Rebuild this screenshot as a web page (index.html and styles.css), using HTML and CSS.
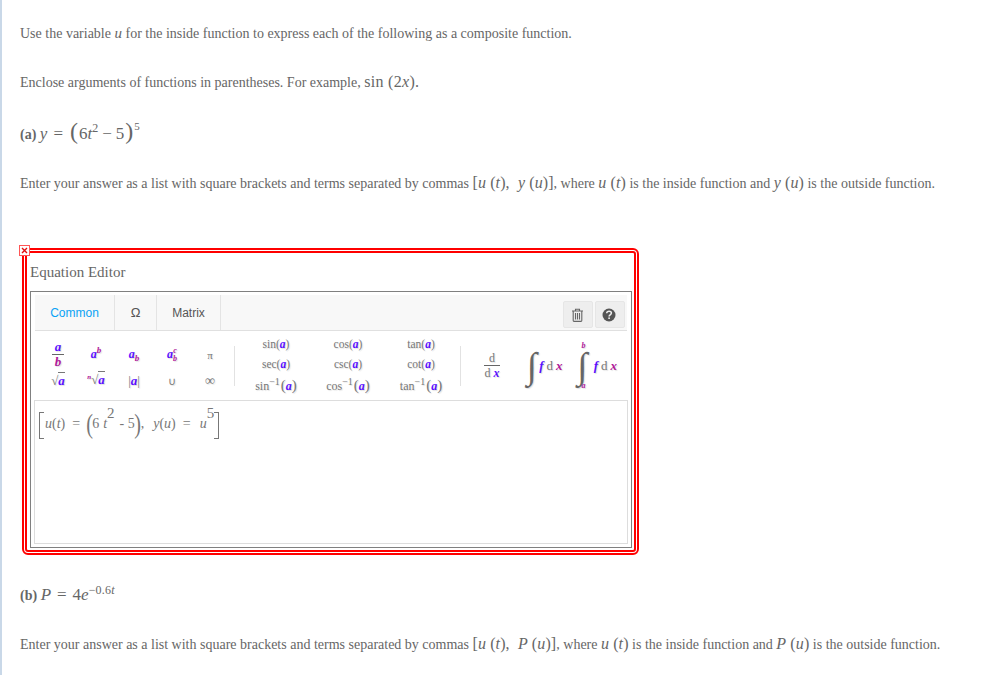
FILE: index.html
```html
<!DOCTYPE html>
<html lang="en">
<head>
<meta charset="utf-8">
<title>Composite functions</title>
<link rel="stylesheet" href="styles.css">
</head>
<body>
<main class="page">
  <p class="line l1">Use the variable <i class="mv">u</i> for the inside function to express each of the following as a composite function.</p>
  <p class="line l2">Enclose arguments of functions in parentheses. For example, <span class="m16">sin (2<i>x</i>).</span></p>
  <p class="line l3"><b>(a)</b> <span class="m17"><i>y</i><span class="rel">=</span></span><span class="bigp">(</span><span class="m17">6<i>t</i><sup class="sq">2</sup><span class="bin">&minus;</span>5</span><span class="bigp">)</span><sup class="pow">5</sup></p>
  <p class="line l4">Enter your answer as a list with square brackets and terms separated by commas <span class="m15">[<i>u</i> (<i>t</i>), &nbsp;<i>y</i> (<i>u</i>)]</span>, where <span class="m15"><i>u</i> (<i>t</i>)</span> is the inside function and <span class="m15"><i>y</i> (<i>u</i>)</span> is the outside function.</p>

  <section class="outer">
    <span class="xbox"><svg width="9" height="9" viewBox="0 0 9 9"><path d="M2 2l5 5M7 2l-5 5" stroke="#e01010" stroke-width="1.4" fill="none"/></svg></span>
    <h2 class="title">Equation Editor</h2>
    <div class="frame">
      <div class="bar">
        <div class="tab active t1">Common</div>
        <div class="tab t2">Ω</div>
        <div class="tab t3">Matrix</div>
        <div class="tools">
          <div class="tool"><svg width="13" height="14" viewBox="0 0 13 14"><path d="M1 3h11M4.500 3V1.300h4V3M2.200 3v9.600c0 .5.300.8.800.8h7c.5 0 .8-.3.800-.8V3M4.500 5v6.500M6.500 5v6.500M8.500 5v6.500" fill="none" stroke="#666" stroke-width="1.100"/></svg></div>
          <div class="tool"><svg width="14" height="14" viewBox="0 0 14 14"><circle cx="7" cy="7" r="6.500" fill="#555"/><path d="M4.700 5.300C4.800 3.900 5.800 3.200 7.100 3.200c1.400 0 2.300.8 2.300 1.900 0 1.900-2.300 1.700-2.300 3.300" fill="none" stroke="#eee" stroke-width="1.500"/><rect x="6.300" y="9.400" width="1.600" height="1.600" fill="#eee"/></svg></div>
        </div>
      </div>
      <div class="palette">
        <div class="basic">
          <span class="cell"><span class="frac big-frac"><i class="v">a</i><i class="p">b</i></span></span>
          <span class="cell"><i class="v">a</i><span class="up p">b</span></span>
          <span class="cell"><i class="v">a</i><span class="dn p">b</span></span>
          <span class="cell"><i class="v">a</i><span class="stack"><i class="p">c</i><i class="p">b</i></span></span>
          <span class="cell g">π</span>
          <span class="cell g big">√<i class="v over">a</i></span>
          <span class="cell g big"><span class="root p">n</span>√<i class="v over">a</i></span>
          <span class="cell g big">|<i class="v">a</i>|</span>
          <span class="cell g">∪</span>
          <span class="cell g inf">∞</span>
        </div>
        <div class="sep"></div>
        <div class="trig">
          <span>sin(<i class="v">a</i>)</span><span>cos(<i class="v">a</i>)</span><span>tan(<i class="v">a</i>)</span>
          <span>sec(<i class="v">a</i>)</span><span>csc(<i class="v">a</i>)</span><span>cot(<i class="v">a</i>)</span>
          <span class="inv">sin<sup>−1</sup><em>(</em><i class="v">a</i><em>)</em></span><span class="inv">cos<sup>−1</sup><em>(</em><i class="v">a</i><em>)</em></span><span class="inv">tan<sup>−1</sup><em>(</em><i class="v">a</i><em>)</em></span>
        </div>
        <div class="sep"></div>
        <div class="calc">
          <span class="frac dd"><span>d</span><span>d <i class="v">x</i></span></span>
          <span class="int first"><span class="intg">∫</span><i class="v">f</i><span class="dx">d</span><i class="p">x</i></span>
          <span class="int defi"><span class="limits"><i class="p">b</i><span class="intg">∫</span><i class="p">a</i></span><i class="v">f</i><span class="dx">d</span><i class="p">x</i></span>
        </div>
      </div>
      <div class="input">
        <div class="expr">
          <span class="br l"></span>
          <i>u</i><span>(</span><i>t</i><span>)</span><span class="eq">=</span><span class="par">(</span><span>6</span><i class="gap">t</i><span class="exp">2</span><span class="minus">- 5</span><span class="par">)</span><span class="comma">,</span><i>y</i><span>(</span><i>u</i><span>)</span><span class="eq">=</span><i class="gap2">u</i><span class="exp e5">5</span>
          <span class="br r"></span>
        </div>
      </div>
    </div>
  </section>

  <p class="line l5"><b>(b)</b> <span class="m17"><i>P</i><span class="rel">=</span>4<i>e</i></span><sup class="epow">−0.6<i>t</i></sup></p>
  <p class="line l6">Enter your answer as a list with square brackets and terms separated by commas <span class="m15">[<i>u</i> (<i>t</i>), &nbsp;<i>P</i> (<i>u</i>)]</span>, where <span class="m15"><i>u</i> (<i>t</i>)</span> is the inside function and <span class="m15"><i>P</i> (<i>u</i>)</span> is the outside function.</p>
</main>
</body>
</html>
```
FILE: styles.css
```css
html, body { margin: 0; padding: 0; background: #fff; height: 100%; overflow: hidden; }
body { font-family: "Liberation Serif", "Times New Roman", serif; color: #666; }
.page { border-left: 2px solid #c9d8e8; padding-left: 18px; height: 675px; box-sizing: border-box; font-size: 14px; }
.line { margin: 0; line-height: 20px; white-space: nowrap; }
.l1 { padding-top: 23px; }
.l2 { margin-top: 28px; }
.l3 { margin-top: 30px; height: 20px; }
.l4 { margin-top: 30px; }
.l5 { margin-top: 30px; }
.l6 { margin-top: 28px; }
.mv { font-size: 15px; }
.m16 { font-size: 16px; letter-spacing: .3px; }
.m17 { font-size: 17px; }
.m15 { font-size: 16px; letter-spacing: .1px; }
.l3 b, .l5 b { font-size: 14px; }
.rel { margin: 0 6px 0 6px; }
.bin { margin: 0 4px; }
.bigp { font-size: 24px; line-height: 16px; margin: 0 1px; }
.sq { font-size: 12px; line-height: 0; }
.pow { font-size: 11px; line-height: 0; position: relative; top: -3px; }
.epow { font-size: 12px; line-height: 0; letter-spacing: .2px; }

.outer { position: relative; box-sizing: border-box; width: 617px; height: 307px; margin: 54px 0 0 2px; border: 5px double #f00; border-radius: 6px; padding: 0 2px 2px 3px; }
.xbox { position: absolute; left: -8px; top: -8px; width: 9px; height: 9px; border: 1px solid #f55; background: #fff; display: flex; }
.title { margin: 0; font-weight: normal; font-size: 15px; color: #666; height: 38px; line-height: 38px; }
.frame { box-sizing: border-box; height: 257px; border: 1px solid #808080; padding: 3px; display: flex; flex-direction: column; }

.bar { display: flex; height: 36px; margin: 0 1px; box-sizing: border-box; background: #f8f8f8; border-bottom: 1px solid #e0e0e0; font-family: "Liberation Sans", Arial, sans-serif; font-size: 12px; }
.tab { display: flex; align-items: center; justify-content: center; border-right: 1px solid #e4e4e4; color: #555; }
.t1 { width: 79px; }
.t2 { width: 41px; font-size: 13px; }
.t3 { width: 63px; }
.active { color: #08a2f5; }
.tools { margin-left: auto; display: flex; gap: 2px; padding: 6px 2px 2px 0; }
.tool { width: 30px; height: 27px; padding-right: 2px; display: flex; align-items: center; justify-content: center; background: #eee; border: 1px solid #e6e6e6; border-radius: 2px; box-sizing: border-box; }

.palette { height: 69px; display: flex; align-items: center; padding-left: 5px; font-size: 12px; color: #777; text-shadow: 1px 1px 1px rgba(0,0,0,.12); }
.basic { display: grid; grid-template-columns: repeat(5, 38px); grid-template-rows: 30px 22px; width: 195px; }
.cell { display: block; text-align: center; align-self: center; font-weight: bold; line-height: 16px; white-space: nowrap; }
.cell.g { font-weight: normal; color: #777; font-size: 11px; }
.cell.big { font-size: 13px; }
.v { color: #5a10ff; font-weight: bold; font-style: italic; }
.p { color: #b0189a; font-weight: bold; font-style: italic; }
.frac { display: inline-flex; flex-direction: column; align-items: center; line-height: 13px; vertical-align: middle; }
.frac > :first-child { border-bottom: 1px solid #666; padding: 0 2px; }
.big-frac { font-size: 13px; line-height: 14px; }
.big-frac > :first-child { padding: 0 3px; }
.up { font-size: 9px; position: relative; top: -5px; }
.dn { font-size: 9px; position: relative; top: 3px; }
.stack { display: inline-flex; flex-direction: column; font-size: 8px; line-height: 8px; vertical-align: middle; }
.root { font-size: 7px; position: relative; top: -5px; margin-right: 0; }
.over { border-top: 1px solid #777; }
.cell.inf { font-size: 14px; }
.sep { width: 1px; height: 40px; background: #e2e2e2; flex: none; }
.trig { display: grid; grid-template-columns: 70px 74px 72px; grid-template-rows: 19px 20px 23px; width: 225px; padding-left: 6px; box-sizing: border-box; text-align: center; align-items: center; font-size: 11.500px; }
.inv { font-size: 12px; white-space: nowrap; }
.inv sup { font-size: 10px; line-height: 0; margin-right: 1px; }
.inv em { font-style: normal; font-size: 15px; }
.calc { display: flex; align-items: center; font-size: 13px; }
.dd { margin-left: 22px; width: 18px; line-height: 14px; font-size: 12px; }
.dd > :first-child { width: 16px; padding: 0; text-align: center; }
.int { display: flex; align-items: center; margin-left: 19px; white-space: nowrap; }
.int.first { margin-left: 26px; }
.intg { font-size: 37px; line-height: 32px; font-style: italic; color: #666; margin-right: 2px; }
.dx { margin: 0 3px 0 3px; }
.int.defi { margin-left: 15px; }
.limits { display: flex; flex-direction: column; align-items: center; font-size: 8px; line-height: 8px; margin-right: 4px; }

.input { box-sizing: border-box; height: 144px; border: 1px solid #ddd; }
.expr { display: flex; align-items: center; height: 46px; padding-left: 4px; font-size: 14px; color: #777; }
.expr > * { flex: none; }
.br { width: 5px; height: 27px; border: 1px solid #777; box-sizing: border-box; margin-top: 3px; }
.br.l { border-right: 0; margin-right: 1px; }
.br.r { border-left: 0; margin-left: 0; }
.eq { margin: 0 7px; font-size: 14px; }
.par { font-size: 27px; margin: 0 -2px 0 -2px; transform: scaleX(.75); }
.gap { margin-left: 4px; }
.gap2 { margin-left: 2px; }
.exp { font-size: 15px; align-self: flex-start; margin: 5px 0 0 0; line-height: 14px; }
.e5 { margin-left: 0; }
.minus { margin-left: 5px; }
.comma { margin: 0 9px 0 1px; }
```
